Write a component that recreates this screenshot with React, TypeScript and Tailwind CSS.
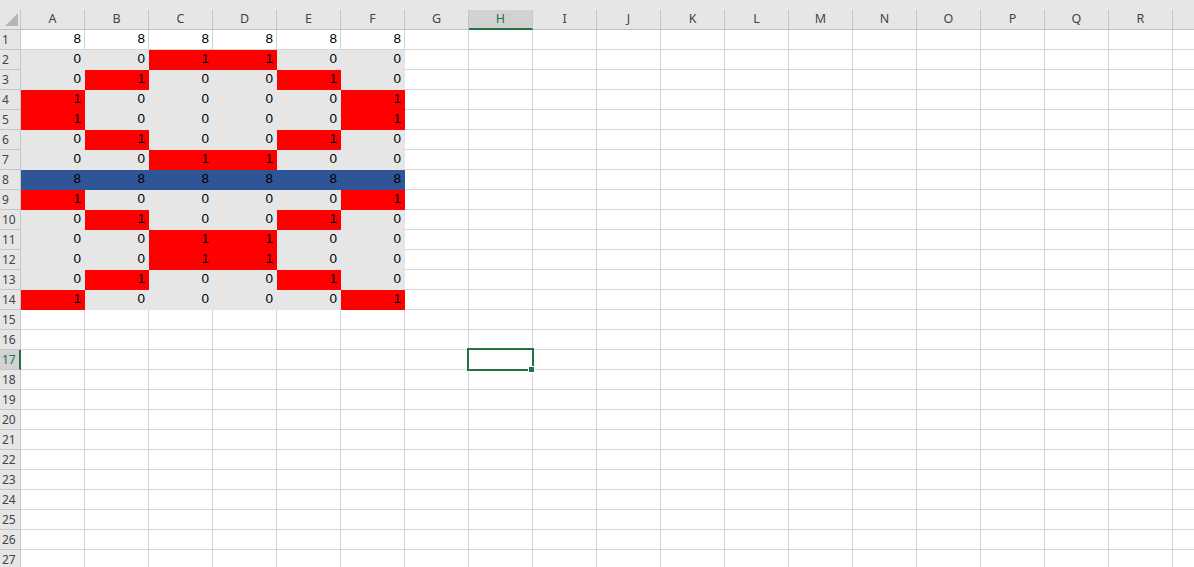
import React from 'react'

const COLS = ['A', 'B', 'C', 'D', 'E', 'F', 'G', 'H', 'I', 'J', 'K', 'L', 'M', 'N', 'O', 'P', 'Q', 'R']

const DATA: number[][] = [
  [8, 8, 8, 8, 8, 8],
  [0, 0, 1, 1, 0, 0],
  [0, 1, 0, 0, 1, 0],
  [1, 0, 0, 0, 0, 1],
  [1, 0, 0, 0, 0, 1],
  [0, 1, 0, 0, 1, 0],
  [0, 0, 1, 1, 0, 0],
  [8, 8, 8, 8, 8, 8],
  [1, 0, 0, 0, 0, 1],
  [0, 1, 0, 0, 1, 0],
  [0, 0, 1, 1, 0, 0],
  [0, 0, 1, 1, 0, 0],
  [0, 1, 0, 0, 1, 0],
  [1, 0, 0, 0, 0, 1],
]

const ROWS = Array.from({ length: 27 }, (_, i) => i + 1)

function cellClass(row: number, col: number) {
  const v = DATA[row - 1]?.[col]
  if (v === undefined || row === 1) return 'bg-white border-r border-b border-[#d4d4d4]'
  if (row === 8) return 'bg-[#2f5597] border-r border-b border-[#2f5597]'
  if (v === 1) return 'bg-[#ff0000] border-r border-b border-[#ff0000]'
  return 'bg-[#e7e6e6] border-r border-b border-[#e7e6e6]'
}

function HeaderRow() {
  return (
    <div className="flex h-[20px] bg-[#e6e6e6] border-b border-[#bfbfbf]">
      <div className="w-[21px] shrink-0 border-r border-[#c6c6c6] relative">
        <svg width="21" height="20" viewBox="0 0 21 20" className="absolute left-0 top-0">
          <polygon points="18,3 18,16 5,16" fill="#b6b6b6" />
        </svg>
      </div>
      {COLS.map((c) =>
        c === 'H' ? (
          <div
            key={c}
            className="w-[64px] shrink-0 h-[20px] -mb-px bg-[#d2d2d2] border-r border-[#c6c6c6] border-b-2 border-b-[#217346] flex items-center justify-center text-[#217346]"
          >
            {c}
          </div>
        ) : (
          <div key={c} className="w-[64px] shrink-0 border-r border-[#c6c6c6] flex items-center justify-center text-[#444]">
            {c}
          </div>
        ),
      )}
      <div className="flex-1" />
    </div>
  )
}

function Row({ r }: { r: number }) {
  const active = r === 17
  return (
    <div className={active ? 'flex h-[20px] relative z-20' : 'flex h-[20px]'}>
      <div
        className={
          active
            ? 'w-[21px] shrink-0 bg-[#d2d2d2] border-r-2 border-[#217346] border-b border-b-[#c6c6c6] text-[#217346] pl-[2px] flex items-center'
            : 'w-[21px] shrink-0 bg-[#e6e6e6] border-r border-b border-[#c6c6c6] text-[#444] pl-[2px] flex items-center'
        }
        style={{ fontFamily: '"Noto Sans", sans-serif', fontSize: 12 }}
      >
        {r}
      </div>
      {COLS.map((c, ci) => {
        const v = DATA[r - 1]?.[ci]
        return (
          <div
            key={c}
            className={`w-[64px] shrink-0 relative flex items-center justify-end pr-[3px] text-black ${cellClass(r, ci)}`}
          >
            {v !== undefined && ci < 6 ? v : null}
            {active && c === 'H' && (
              <div className="absolute left-[-2px] top-[-2px] w-[67px] h-[23px] border-2 border-[#217346] z-10 pointer-events-none">
                <div className="absolute left-[59px] top-[16px] w-[7px] h-[7px] bg-[#217346] border border-white" />
              </div>
            )}
          </div>
        )
      })}
      <div className="flex-1 border-b border-[#d4d4d4]" />
    </div>
  )
}

export default function App() {
  return (
    <div className="w-[1194px] h-[567px] overflow-hidden bg-white select-none">
      <div className="h-[10px] bg-[#e6e6e6]" />
      <div style={{ fontFamily: '"Noto Sans", sans-serif', fontSize: 12.5 }}>
        <HeaderRow />
      </div>
      <div style={{ fontFamily: '"Liberation Sans", Arial, sans-serif', fontSize: 13.5 }}>
        {ROWS.map((r) => (
          <Row key={r} r={r} />
        ))}
      </div>
    </div>
  )
}
